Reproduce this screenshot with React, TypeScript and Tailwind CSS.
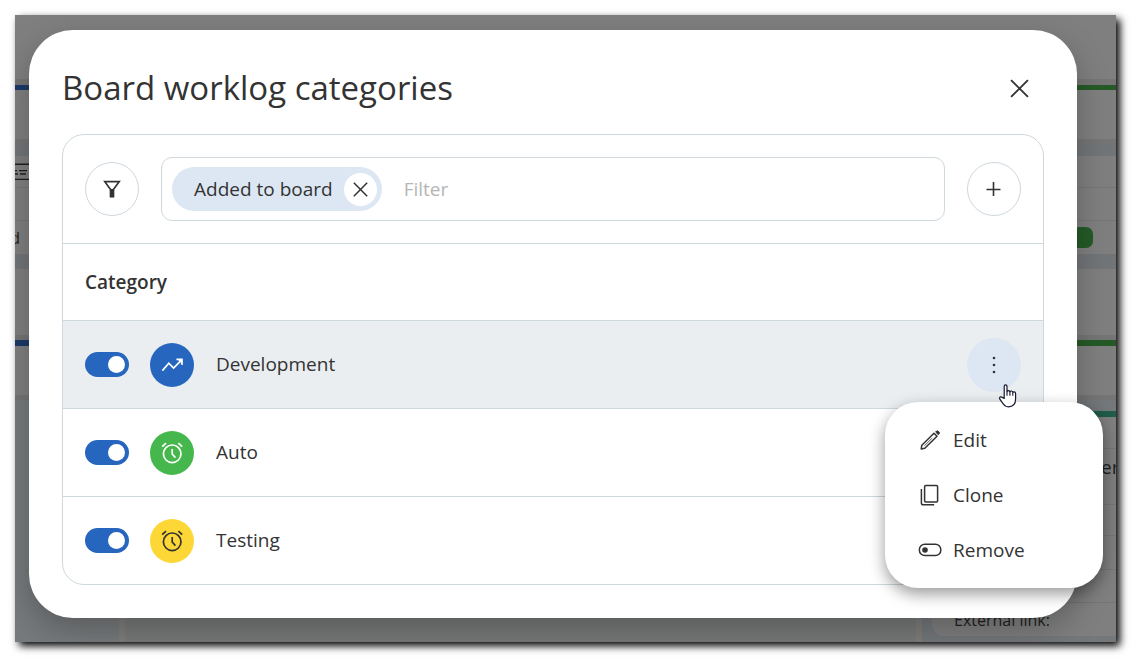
import { ReactNode, useState } from "react";

interface IconProps {
  className?: string;
}

interface CategoryProps {
  id: number;
  name: string;
  color: string;
  icon: ReactNode;
}

function CloseIcon({ className }: IconProps) {
  return (
    <svg viewBox="0 0 18 18" className={className} fill="none" stroke="currentColor">
      <path d="M1 1l16 16M17 1L1 17" strokeWidth="1.8" />
    </svg>
  );
}

function FilterIcon() {
  return (
    <svg viewBox="0 0 18 18" className="size-[18px]">
      <path
        d="M1.8 1.7h14.4L10.4 9.6v6.9H7.6V9.6z"
        fill="none"
        stroke="currentColor"
        strokeWidth="1.7"
      />
      <path d="M6.9 9h4.2v8.4H6.9z" fill="currentColor" />
    </svg>
  );
}

function PlusIcon() {
  return (
    <svg viewBox="0 0 16 16" className="size-4" fill="none" stroke="currentColor">
      <path d="M7.5 1v14M.5 8.5h14" strokeWidth="1.6" />
    </svg>
  );
}

function DotsIcon() {
  return (
    <svg viewBox="0 0 20 20" className="size-5" fill="currentColor">
      <circle cx="10" cy="3" r="1.3" />
      <circle cx="10" cy="10" r="1.3" />
      <circle cx="10" cy="17" r="1.3" />
    </svg>
  );
}

function TrendIcon() {
  return (
    <svg viewBox="0 0 22 22" className="size-[22px]" fill="none" stroke="currentColor">
      <path d="M1.4 16.6l6.4-7.4 4.8 4.8 7.6-7.6" strokeWidth="1.7" />
      <path d="M16.4 5.2h4.8V10z" fill="currentColor" stroke="none" />
      <path d="M15.4 5.4H21v5.6" strokeWidth="1.6" />
    </svg>
  );
}

function AlarmIcon() {
  return (
    <svg viewBox="0 0 22 22" className="size-[22px]" fill="none" stroke="currentColor">
      <circle cx="11.2" cy="11.8" r="8.8" strokeWidth="1.7" />
      <path d="M11.2 7v5l3.2 3.6" strokeWidth="1.7" />
      <path d="M1.2 4.6L5 1.2M21.2 4.6l-3.8-3.4" strokeWidth="1.8" />
    </svg>
  );
}

function PencilIcon() {
  return (
    <svg viewBox="0 0 22 22" className="size-[22px]" fill="none" stroke="currentColor">
      <path
        d="M2.2 19.9l.6-3.6L15 4.2l3 3L5.8 19.3z"
        strokeWidth="1.5"
        strokeLinejoin="round"
      />
      <path d="M5.4 16.8L13 9.2" strokeWidth=".8" />
      <path
        d="M16.6 3l1-1q.8-.6 1.4 0l1.3 1.3q.6.8 0 1.4l-1 1z"
        fill="currentColor"
        strokeWidth=".8"
      />
    </svg>
  );
}

function CloneIcon() {
  return (
    <svg viewBox="0 0 22 22" className="size-[22px]" fill="none" stroke="currentColor">
      <rect x="5.6" y="1.6" width="13" height="16.4" rx="1.2" strokeWidth="1.5" />
      <path d="M2.4 5v14q0 1.8 1.8 1.8h11" strokeWidth="1.5" />
    </svg>
  );
}

function RemoveIcon() {
  return (
    <svg viewBox="0 0 24 24" className="size-6" fill="none" stroke="currentColor">
      <rect x="1.4" y="6.2" width="21.4" height="11.4" rx="5.4" strokeWidth="1.5" />
      <circle cx="7" cy="12" r="2.8" fill="currentColor" stroke="none" />
    </svg>
  );
}

function HandCursor() {
  return (
    <svg viewBox="0 0 18 24" className="h-6 w-[18px]">
      <path
        d="M5.2 14.4V2.4q0-1.6 1.4-1.6T8 2.4v5.2q.2-1 1.4-1t1.5 1.2q.3-.8 1.4-.8t1.5 1.4q.3-.6 1.2-.6 1.6 0 1.6 1.8v5.2q0 8-7.2 8-3.4 0-5.2-3L1 15.4q-.9-1.8.2-2.4 1.2-.6 2.4.6z"
        fill="#fff"
        stroke="#15152b"
        strokeWidth="1.2"
        strokeLinejoin="round"
      />
      <path d="M8 7.4v4.4M10.9 7.8v4M13.8 8.6v3.2" stroke="#15152b" strokeWidth="1.1" />
    </svg>
  );
}

function LinesIcon() {
  return (
    <svg viewBox="0 0 14 18" className="h-[18px] w-[14px]" stroke="#1f1f1f" fill="none">
      <path d="M0 1.2h14M0 16.4h14" strokeWidth="1.4" />
      <path d="M0 11h3M5 11h6M4 7.6h8M0 7.6h2" strokeWidth="1.4" />
    </svg>
  );
}

const categories: CategoryProps[] = [
  { id: 1, name: "Development", color: "bg-[#2666bf] text-white", icon: <TrendIcon /> },
  { id: 2, name: "Auto", color: "bg-[#46b74c] text-white", icon: <AlarmIcon /> },
  { id: 3, name: "Testing", color: "bg-[#fdd735] text-[#333]", icon: <AlarmIcon /> },
];

const menuItems = [
  { label: "Edit", icon: <PencilIcon /> },
  { label: "Clone", icon: <CloneIcon /> },
  { label: "Remove", icon: <RemoveIcon /> },
];

function ColumnTop({ line, children }: { line: string; children?: ReactNode }) {
  return (
    <>
      <div className="h-[6px] bg-[#757575]" />
      <div className={`h-[5px] ${line}`} />
      <div className="h-[49px] bg-[#7f7f7f]" />
      <div className="h-[6px] bg-[#757575]" />
      <div className="h-[11px] bg-[#727578]" />
      {children}
      <div className="h-[15px] bg-[#727578]" />
      <div className="h-[66px] bg-[#7f7f7f]" />
      <div className="h-[5px] bg-[#757575]" />
      <div className={`h-[6px] ${line}`} />
      <div className="h-[49px] bg-[#7f7f7f]" />
      <div className="h-[5px] bg-[#757575]" />
    </>
  );
}

function Board() {
  return (
    <div className="flex flex-col bg-[#7f7e7d] text-base text-[#1f1f1f]" aria-hidden="true">
      <div className="h-16 bg-[#7f7f7f]" />
      <div className="flex grow gap-[6px]">
        <div className="flex w-[104px] flex-col bg-[#777a7c]">
          <ColumnTop line="bg-[#1b3a68]">
            <div className="flex h-8 items-center border-b border-[#757575] bg-[#7f7f7f]">
              <LinesIcon />
            </div>
            <div className="h-[33px] border-b border-[#757575] bg-[#7f7f7f]" />
            <div className="flex h-[33px] items-center bg-[#7f7f7f]">
              <span className="flex w-[5px] justify-end overflow-hidden">d</span>
            </div>
          </ColumnTop>
        </div>
        <div className="grow bg-[#777a79]" />
        <div className="flex w-[194px] flex-col bg-[#75787b]">
          <ColumnTop line="bg-[#255a27]">
            <div className="h-8 border-b border-[#757575] bg-[#7f7f7f]" />
            <div className="h-[33px] border-b border-[#757575] bg-[#7f7f7f]" />
            <div className="flex h-[33px] items-center bg-[#7f7f7f]">
              <span className="h-[21px] w-[171px] rounded-[7px] bg-[#255a27]" />
            </div>
          </ColumnTop>
          <div className="mt-[11px] ml-[10px] overflow-hidden rounded-bl-xl bg-[#7f7f7f]">
            <div className="h-[6px] bg-[#1f5c49]" />
            <div className="h-8 border-b border-[#757575]" />
            <div className="flex h-14 justify-end overflow-hidden border-b border-[#757575] pt-1">
              <span className="w-[15px] text-[19px]">er</span>
            </div>
            <div className="h-[31px] border-b border-[#757575]" />
            <div className="h-[34px] border-b border-[#757575]" />
            <div className="h-[33px] border-b border-[#757575]" />
            <div className="flex h-[33px] items-center pl-[22px]">External link:</div>
          </div>
        </div>
      </div>
    </div>
  );
}

function ActionsMenu() {
  return (
    <div
      role="menu"
      className="absolute top-16 -right-[82px] z-10 flex w-[218px] flex-col rounded-[33px] bg-white pt-[11px] pb-[10px] shadow-[0_6px_16px_rgba(0,0,0,0.4)]"
    >
      {menuItems.map((item) => (
        <button
          key={item.label}
          type="button"
          role="menuitem"
          className="flex h-[55px] items-center gap-[11px] pl-[33px] text-left"
        >
          <span className="flex w-6 justify-center">{item.icon}</span>
          {item.label}
        </button>
      ))}
    </div>
  );
}

function Toolbar() {
  const [added, setAdded] = useState(true);

  return (
    <div className="flex items-center gap-[22px] p-[22px]">
      <button
        type="button"
        aria-label="Filters"
        className="flex size-[54px] shrink-0 items-center justify-center rounded-full border border-[#cfd8dc]"
      >
        <FilterIcon />
      </button>
      <div className="flex h-16 min-w-0 grow items-center gap-[22px] rounded-[11px] border border-[#cfd8dc] px-[10px]">
        {added && (
          <span className="flex h-11 shrink-0 items-center gap-[11px] rounded-full bg-[#dde7f4] pr-[5px] pl-[22px]">
            Added to board
            <button
              type="button"
              aria-label="Remove filter"
              onClick={() => setAdded(false)}
              className="flex size-[33px] items-center justify-center rounded-full bg-white"
            >
              <CloseIcon className="size-[15px]" />
            </button>
          </span>
        )}
        <input
          type="text"
          aria-label="Filter"
          placeholder="Filter"
          className="min-w-0 grow outline-none placeholder:text-[#b5b5b5]"
        />
      </div>
      <button
        type="button"
        aria-label="Add category"
        className="flex size-[54px] shrink-0 items-center justify-center rounded-full border border-[#cfd8dc]"
      >
        <PlusIcon />
      </button>
    </div>
  );
}

function CategoryTable() {
  const [openId, setOpenId] = useState<number | null>(1);

  return (
    <table className="w-full border-separate border-spacing-0">
      <thead>
        <tr className="h-[77px]">
          <th
            colSpan={4}
            className="border-t border-[#cfd8dc] pl-[22px] text-left font-semibold"
          >
            Category
          </th>
        </tr>
      </thead>
      <tbody>
        {categories.map((category) => {
          const isOpen = openId === category.id;
          return (
            <tr
              key={category.id}
              className={
                isOpen
                  ? "h-[88px] bg-[#eaeef1] [&>td]:border-t [&>td]:border-[#cfd8dc]"
                  : "h-[88px] [&>td]:border-t [&>td]:border-[#cfd8dc]"
              }
            >
              <td className="w-[87px] pl-[22px]">
                <input
                  type="checkbox"
                  defaultChecked
                  aria-label={category.name}
                  className="flex h-[25px] w-11 appearance-none items-center rounded-full bg-[#9aa5ad] p-1 before:size-[17px] before:rounded-full before:bg-white checked:justify-end checked:bg-[#2666bf]"
                />
              </td>
              <td className="w-[66px]">
                <span
                  className={`flex size-11 items-center justify-center rounded-full ${category.color}`}
                >
                  {category.icon}
                </span>
              </td>
              <td>{category.name}</td>
              <td className="w-[76px] pr-[22px]">
                {isOpen && (
                  <div className="relative">
                    <button
                      type="button"
                      aria-label="Actions"
                      aria-haspopup="menu"
                      onClick={() => setOpenId(null)}
                      className="flex size-[54px] items-center justify-center rounded-full bg-[#dde7f4]"
                    >
                      <DotsIcon />
                    </button>
                    <ActionsMenu />
                    <span className="pointer-events-none absolute top-[46px] left-8 z-20">
                      <HandCursor />
                    </span>
                  </div>
                )}
              </td>
            </tr>
          );
        })}
      </tbody>
    </table>
  );
}

export default function App() {
  return (
    <main className="bg-white pt-[15px] pr-[27px] pb-[27px] pl-[15px] font-['Open_Sans',sans-serif] text-[19px] text-[#333]">
      <div className="grid overflow-hidden shadow-[4px_4px_8px_#000] *:[grid-area:1/1]">
        <Board />
        <div
          role="dialog"
          aria-labelledby="dialog-title"
          className="relative mt-[15px] mr-[39px] mb-6 ml-[14px] rounded-[44px] bg-white px-[33px] pb-[33px] shadow-[0_12px_32px_rgba(0,0,0,0.25)]"
        >
          <div className="flex h-[104px] items-center justify-between pt-3 pr-[15px]">
            <h1 id="dialog-title" className="text-[33px]">
              Board worklog categories
            </h1>
            <button type="button" aria-label="Close">
              <CloseIcon className="size-[19px]" />
            </button>
          </div>
          <div className="rounded-[22px] border border-[#cfd8dc]">
            <Toolbar />
            <CategoryTable />
          </div>
        </div>
      </div>
    </main>
  );
}
